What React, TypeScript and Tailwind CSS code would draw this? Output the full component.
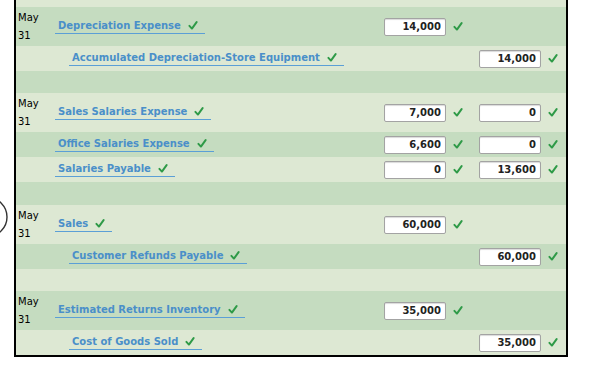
type Entry = {
  date?: boolean;
  account?: string;
  credit?: boolean;
  debit?: string;
  creditAmt?: string;
  h: number;
};

const rows: Entry[] = [
  { h: 39, date: true, account: "Depreciation Expense", debit: "14,000" },
  { h: 25, account: "Accumulated Depreciation-Store Equipment", credit: true, creditAmt: "14,000" },
  { h: 22 },
  { h: 39, date: true, account: "Sales Salaries Expense", debit: "7,000", creditAmt: "0" },
  { h: 25, account: "Office Salaries Expense", debit: "6,600", creditAmt: "0" },
  { h: 25, account: "Salaries Payable", debit: "0", creditAmt: "13,600" },
  { h: 23 },
  { h: 39, date: true, account: "Sales", debit: "60,000" },
  { h: 25, account: "Customer Refunds Payable", credit: true, creditAmt: "60,000" },
  { h: 22 },
  { h: 39, date: true, account: "Estimated Returns Inventory", debit: "35,000" },
  { h: 25, account: "Cost of Goods Sold", credit: true, creditAmt: "35,000" },
];

const font = { fontFamily: "'DejaVu Sans', Verdana, sans-serif" };

function Check() {
  return (
    <svg width="10" height="9" viewBox="0 0 10 10" className="shrink-0">
      <path d="M1 5.4 L3.8 8.4 L9 1.3" fill="none" stroke="#2e9a47" strokeWidth="2.2" strokeLinecap="round" strokeLinejoin="round" />
    </svg>
  );
}

function Amount({ value }: { value: string }) {
  return (
    <div className="flex items-center">
      <input
        readOnly
        value={value}
        style={font}
        className="h-[18px] w-[62px] rounded-[2px] border border-[#a3a3a3] bg-white pr-[4px] text-right text-[10px] font-bold text-[#222] shadow-[inset_0_1px_1px_rgba(0,0,0,0.15)] outline-none"
      />
      <span className="ml-[7px] flex"><Check /></span>
    </div>
  );
}

export default function App() {
  return (
    <div className="relative h-[365px] w-[595px] overflow-hidden bg-white" style={font}>
      <svg className="absolute left-0 top-[190px]" width="12" height="54" viewBox="0 190 12 54">
        <circle cx="-12.5" cy="217" r="19.5" fill="none" stroke="#333" strokeWidth="1.4" />
      </svg>
      <div className="ml-[14px] w-[554px] border-b-2 border-l-2 border-r-2 border-black">
        <div className="h-[7px] bg-[#dde8d3]" />
        {rows.map((r, i) => (
          <div
            key={i}
            className={`flex items-center ${i % 2 === 0 ? "bg-[#c5dcc0]" : "bg-[#dde8d3]"}`}
            style={{ height: r.h }}
          >
            <div className="w-[39px] shrink-0 pl-[2px] text-[10px] leading-[18px] text-black">
              {r.date && <><div>May</div><div>31</div></>}
            </div>
            <div className="flex flex-1 items-center">
              {r.account && (
                <span className={`flex items-center gap-[7px] border-b border-[#5b9fd6] pb-[1px] pl-[3px] pr-[7px] text-[10px] font-bold leading-[12px] text-[#4a8fc9] ${r.credit ? "ml-[14px]" : ""}`}>
                  {r.account}
                  <Check />
                </span>
              )}
            </div>
            <div className="w-[95px] shrink-0">{r.debit && <Amount value={r.debit} />}</div>
            <div className="w-[87px] shrink-0">{r.creditAmt && <Amount value={r.creditAmt} />}</div>
          </div>
        ))}
      </div>
    </div>
  );
}
